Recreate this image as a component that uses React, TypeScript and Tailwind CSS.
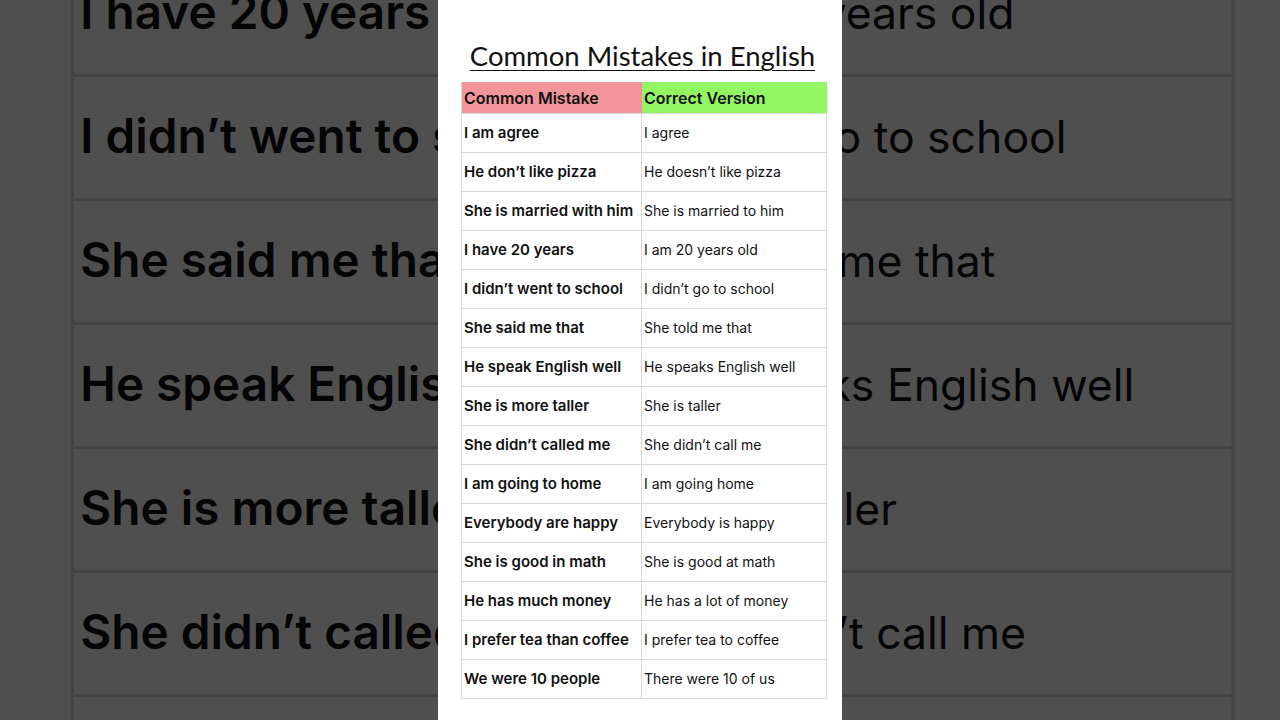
import React from "react";

const rows: [string, string][] = [
  ["I am agree", "I agree"],
  ["He don’t like pizza", "He doesn’t like pizza"],
  ["She is married with him", "She is married to him"],
  ["I have 20 years", "I am 20 years old"],
  ["I didn’t went to school", "I didn’t go to school"],
  ["She said me that", "She told me that"],
  ["He speak English well", "He speaks English well"],
  ["She is more taller", "She is taller"],
  ["She didn’t called me", "She didn’t call me"],
  ["I am going to home", "I am going home"],
  ["Everybody are happy", "Everybody is happy"],
  ["She is good in math", "She is good at math"],
  ["He has much money", "He has a lot of money"],
  ["I prefer tea than coffee", "I prefer tea to coffee"],
  ["We were 10 people", "There were 10 of us"],
];

function Sheet() {
  return (
    <div className="mx-auto flex h-[720px] w-[404px] flex-col bg-white pt-[38px] font-['Inter',sans-serif] text-[#111]">
      <h1 className="pl-[5px] text-center font-['Lato',sans-serif] text-[27.5px] font-normal leading-[36px] underline decoration-1 underline-offset-[4px]">
        Common Mistakes in English
      </h1>
      <div className="ml-[23px] mt-[8px] w-[366px] border border-t-0 border-[#d9d9d9]">
        <div className="grid grid-cols-[180px_185px]">
          <div className="flex h-[31px] items-center bg-[#f2959b] pl-[2px] text-[16px] font-semibold">
            Common Mistake
          </div>
          <div className="flex h-[31px] items-center bg-[#93f563] pl-[2px] text-[16px] font-semibold">
            Correct Version
          </div>
        </div>
        {rows.map(([wrong, right], i) => (
          <div
            key={i}
            className="grid grid-cols-[180px_185px] border-t border-[#d9d9d9] leading-[20px] first:border-t-0"
          >
            <div className="flex h-[38px] items-center border-r border-[#d9d9d9] pl-[2px] text-[15px] font-semibold">
              {wrong}
            </div>
            <div className="flex h-[38px] items-center pl-[2px] text-[14px]">
              {right}
            </div>
          </div>
        ))}
      </div>
    </div>
  );
}

export default function App() {
  return (
    <div className="relative h-[720px] w-[1280px] overflow-hidden bg-white">
      {/* zoomed, darkened copy behind the page */}
      <div className="absolute inset-0 bg-white">
        <div className="h-full w-full origin-[640px_358.5px] scale-[3.18]">
          <Sheet />
        </div>
        <div className="absolute inset-0 bg-black/[0.69]" />
      </div>
      <div className="relative">
        <Sheet />
      </div>
    </div>
  );
}
